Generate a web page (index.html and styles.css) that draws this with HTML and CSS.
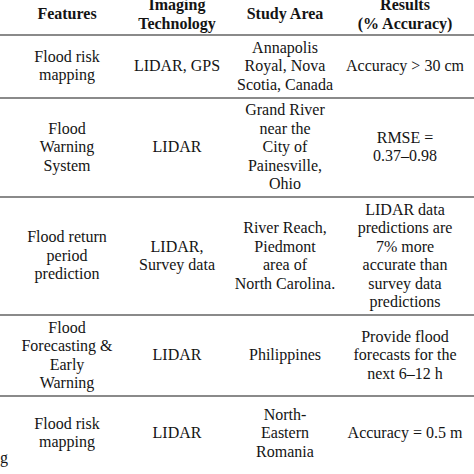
FILE: index.html
```html
<!DOCTYPE html>
<html>
<head>
<meta charset="utf-8">
<link rel="stylesheet" href="styles.css">
</head>
<body>
<div class="table">
  <div class="row head">
    <div class="cell gutter"></div>
    <div class="cell">Features</div>
    <div class="cell">Imaging<br>Technology</div>
    <div class="cell">Study Area</div>
    <div class="cell">Results<br>(% Accuracy)</div>
  </div>
  <div class="row">
    <div class="cell gutter"></div>
    <div class="cell">Flood risk<br>mapping</div>
    <div class="cell">LIDAR, GPS</div>
    <div class="cell">Annapolis<br>Royal, Nova<br>Scotia, Canada</div>
    <div class="cell">Accuracy &gt; 30 cm</div>
  </div>
  <div class="row">
    <div class="cell gutter"></div>
    <div class="cell">Flood<br>Warning<br>System</div>
    <div class="cell">LIDAR</div>
    <div class="cell">Grand River<br>near the<br>City of<br>Painesville,<br>Ohio</div>
    <div class="cell">RMSE =<br>0.37–0.98</div>
  </div>
  <div class="row">
    <div class="cell gutter"></div>
    <div class="cell">Flood return<br>period<br>prediction</div>
    <div class="cell">LIDAR,<br>Survey data</div>
    <div class="cell">River Reach,<br>Piedmont<br>area of<br>North Carolina.</div>
    <div class="cell">LIDAR data<br>predictions are<br>7% more<br>accurate than<br>survey data<br>predictions</div>
  </div>
  <div class="row">
    <div class="cell gutter"></div>
    <div class="cell">Flood<br>Forecasting &amp;<br>Early<br>Warning</div>
    <div class="cell">LIDAR</div>
    <div class="cell">Philippines</div>
    <div class="cell">Provide flood<br>forecasts for the<br>next 6–12 h</div>
  </div>
  <div class="row last">
    <div class="cell gutter frag">g</div>
    <div class="cell">Flood risk<br>mapping</div>
    <div class="cell">LIDAR</div>
    <div class="cell">North-<br>Eastern<br>Romania</div>
    <div class="cell">Accuracy = 0.5 m</div>
  </div>
</div>
</body>
</html>
```
FILE: styles.css
```css
html, body {
  margin: 0;
  padding: 0;
  background: #ffffff;
  overflow: hidden;
}
body {
  width: 474px;
  height: 474px;
  font-family: "Liberation Serif", "Times New Roman", serif;
  font-size: 16px;
  line-height: 18.5px;
  color: #141414;
}
.table {
  display: flex;
  flex-direction: column;
}
.row {
  display: grid;
  grid-template-columns: 14px 106px 114px 102px 138px;
  align-items: center;
  padding: 2.5px 0;
  border-bottom: 2px solid #8a8a8a;
}
.row.head {
  margin-top: -5px;
  height: 41px;
  padding: 0;
  box-sizing: border-box;
  font-weight: bold;
}
.row.last {
  border-bottom: none;
}
.cell {
  text-align: center;
  white-space: nowrap;
}
.gutter {
  text-align: left;
}
.frag {
  align-self: start;
  padding-top: 49px;
}
```
